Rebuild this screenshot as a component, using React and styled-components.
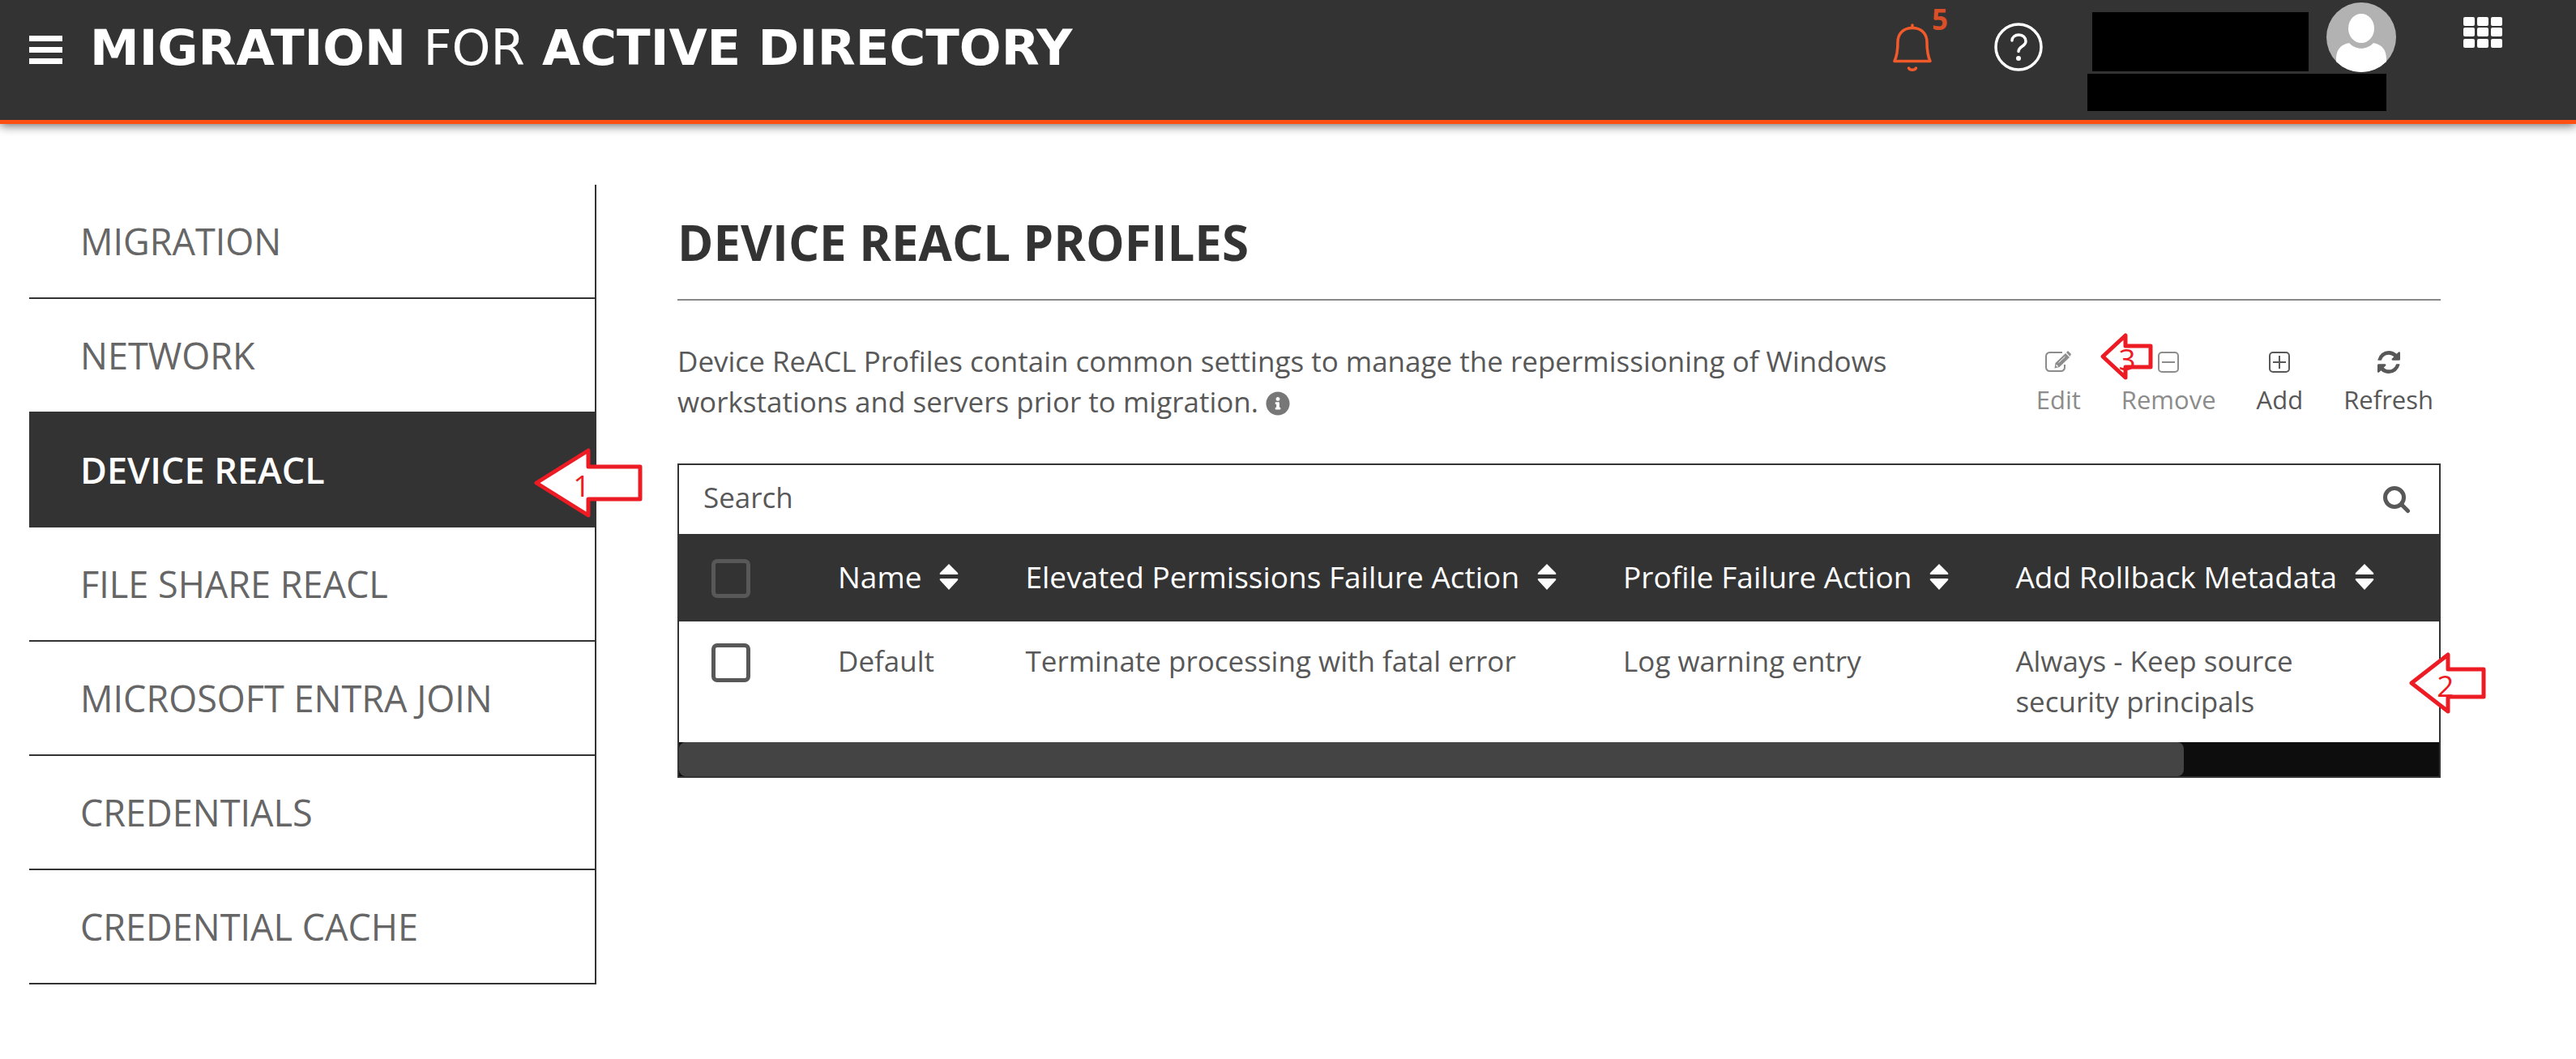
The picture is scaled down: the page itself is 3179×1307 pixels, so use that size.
import { useState } from "react";
import styled, { createGlobalStyle } from "styled-components";
import { FaInfoCircle } from "react-icons/fa";

const menu = [
  "Migration",
  "Network",
  "Device ReACL",
  "File Share ReACL",
  "Microsoft Entra Join",
  "Credentials",
  "Credential Cache",
];

const columns = [
  "Name",
  "Elevated Permissions Failure Action",
  "Profile Failure Action",
  "Add Rollback Metadata",
];

const profiles = [
  {
    name: "Default",
    elevated: "Terminate processing with fatal error",
    failure: "Log warning entry",
    rollback: "Always - Keep source security principals",
  },
];

function BellIcon() {
  return (
    <svg width="48" height="60" viewBox="0 0 48 60" fill="none" stroke="#f15a2b" strokeWidth="3.5" strokeLinecap="round">
      <path d="M24 3v3" />
      <path d="M24 6.500C12.500 6.500 6 14 6 24c0 12-1 17-4 23.500h44c-3-6.500-4-11.500-4-23.500C42 14 35.500 6.500 24 6.500z" strokeLinejoin="round" />
      <path d="M19.500 56c1.500 3 7.500 3 9 0" />
    </svg>
  );
}

function HelpIcon() {
  return (
    <svg width="60" height="60" viewBox="0 0 60 60" fill="none" stroke="#fff" strokeWidth="3.5">
      <circle cx="30" cy="30" r="28" />
      <path d="M22 22c0-4 3.500-7 8.500-7s8.500 3.500 8.500 8c0 6.500-9 6-9 12.500" strokeLinecap="round" />
      <circle cx="30" cy="44" r="3" fill="#fff" stroke="none" />
    </svg>
  );
}

function UserIcon() {
  return (
    <svg width="86" height="86" viewBox="0 0 86 86">
      <clipPath id="avatar">
        <circle cx="43" cy="43" r="43" />
      </clipPath>
      <g clipPath="url(#avatar)">
        <rect width="86" height="86" fill="#b2b2b2" />
        <ellipse cx="43" cy="32" rx="16" ry="18" fill="#fff" />
        <path d="M12 86V70c0-11 5-18 16-20 8 9 22 9 30 0 11 2 16 9 16 20v16z" fill="#fff" />
      </g>
    </svg>
  );
}

function AppsIcon() {
  const spots = [0, 17, 34];
  return (
    <svg width="48" height="38" viewBox="0 0 48 38" fill="#fff">
      {[0, 13, 27].map((y) =>
        spots.map((x) => <rect key={x + "-" + y} x={x} y={y} width="14" height="11" rx="2" />)
      )}
    </svg>
  );
}

function EditIcon() {
  return (
    <svg width="32" height="28" viewBox="0 0 32 28" fill="none" stroke="currentColor" strokeWidth="2">
      <path d="M21 2H5.500A4.500 4.500 0 0 0 1 6.500v14A4.500 4.500 0 0 0 5.500 25h14a4.500 4.500 0 0 0 4.500-4.500V17" />
      <path d="M11.500 21.500l1-6.500L25 3l5 5-12.500 12z" fill="currentColor" stroke="none" />
      <path d="M26 2l2-2 4 4-1.500 3z" fill="currentColor" stroke="none" />
      <path d="M16.500 14.500l8-7.500" stroke="#fff" strokeWidth="1" />
      <path d="M13.500 17.500l2 2" stroke="#fff" strokeWidth="1.500" />
    </svg>
  );
}

function BoxIcon({ plus }) {
  return (
    <svg width="26" height="26" viewBox="0 0 26 26" fill="none" stroke="currentColor" strokeWidth="2">
      <rect x="1" y="1" width="24" height="24" rx="4" />
      <path d={plus ? "M5 13h16M13 5v16" : "M5 13h16"} />
    </svg>
  );
}

function RefreshIcon() {
  return (
    <svg width="28" height="28" viewBox="0 0 1536 1536" fill="currentColor">
      <path d="M1511 928q0 5-1 7-64 268-268 434.500T764 1536q-146 0-282.500-55T238 1324l-129 129q-19 19-45 19t-45-19-19-45V960q0-26 19-45t45-19h448q26 0 45 19t19 45-19 45l-137 137q71 66 161 102t187 36q134 0 250-65t186-179q11-17 53-117 8-23 30-23h192q13 0 22.500 9.500t9.500 22.500zm25-800v448q0 26-19 45t-45 19h-448q-26 0-45-19t-19-45 19-45l138-138Q969 256 768 256q-134 0-250 65T332 500q-11 17-53 117-8 23-30 23H50q-13 0-22.500-9.500T18 608v-7q65-268 270-434.500T768 0q146 0 284 55.500T1297 212l130-129q19-19 45-19t45 19 19 45z" />
    </svg>
  );
}

function SearchIcon() {
  return (
    <svg width="34" height="34" viewBox="0 0 34 34" fill="none" stroke="currentColor" strokeWidth="5">
      <circle cx="14" cy="14" r="11.500" />
      <path d="M22.500 22.500l8 8" strokeLinecap="round" />
    </svg>
  );
}

function SortIcon() {
  return (
    <svg width="24" height="32" viewBox="0 0 24 32" fill="#fff">
      <path d="M12 0l11 11q1 2-1 2H2q-2 0-1-2zM12 32L1 20q-1-2 1-2h20q2 0 1 2z" />
    </svg>
  );
}

function Arrow({ width, height, points, children, ...pos }) {
  return (
    <Callout $pos={pos} $w={width} $h={height}>
      <svg width={width} height={height}>
        <polygon points={points} fill="#fff" stroke="#ed1c24" strokeWidth="5" strokeLinejoin="round" />
      </svg>
      <span>{children}</span>
    </Callout>
  );
}

function App() {
  const [active, setActive] = useState("Device ReACL");
  const [search, setSearch] = useState("");

  return (
    <>
      <GlobalStyle />
      <Header>
        <MenuButton aria-label="Menu">
          <i />
          <i />
          <i />
        </MenuButton>
        <Brand>
          Migration <span>for</span> Active Directory
        </Brand>
        <Alerts aria-label="Notifications">
          <BellIcon />
          <b>5</b>
        </Alerts>
        <IconButton aria-label="Help">
          <HelpIcon />
        </IconButton>
        <Account>
          <UserRow>
            <NameBlock />
            <UserIcon />
          </UserRow>
          <MailBlock />
        </Account>
        <AppsButton aria-label="Apps">
          <AppsIcon />
        </AppsButton>
      </Header>

      <Layout>
        <Sidebar>
          {menu.map((item) => (
            <MenuItem
              key={item}
              href="#"
              $active={item === active}
              onClick={() => setActive(item)}
            >
              {item}
              {item === "Device ReACL" && (
                <Arrow left="623px" top="43px" width={134} height={86} points="3,43 67,3 67,23 131,23 131,63 67,63 67,83">
                  1
                </Arrow>
              )}
            </MenuItem>
          ))}
        </Sidebar>

        <Content>
          <h1>Device ReACL Profiles</h1>
          <Intro>
            <p>
              Device ReACL Profiles contain common settings to manage the repermissioning of
              Windows workstations and servers prior to migration. <FaInfoCircle />
            </p>
            <Toolbar>
              <Tool disabled>
                <EditIcon />
                Edit
              </Tool>
              <Tool disabled>
                <BoxIcon />
                Remove
              </Tool>
              <Tool>
                <BoxIcon plus />
                Add
              </Tool>
              <Tool>
                <RefreshIcon />
                Refresh
              </Tool>
              <Arrow left="78px" top="-11px" width={66} height={60} points="4,30 32,4 32,17 63,17 63,43 32,43 32,56">
                3
              </Arrow>
            </Toolbar>
          </Intro>

          <Panel>
            <SearchBar>
              <input
                type="text"
                aria-label="Search"
                placeholder="Search"
                value={search}
                onChange={(e) => setSearch(e.target.value)}
              />
              <button aria-label="Search">
                <SearchIcon />
              </button>
            </SearchBar>
            <Table>
              <thead>
                <tr>
                  <th>
                    <Checkbox type="checkbox" aria-label="Select all" disabled />
                  </th>
                  {columns.map((column) => (
                    <th key={column}>
                      <SortButton>
                        {column}
                        <SortIcon />
                      </SortButton>
                    </th>
                  ))}
                </tr>
              </thead>
              <tbody>
                {profiles.map((profile) => (
                  <tr key={profile.name}>
                    <td>
                      <Checkbox type="checkbox" aria-label={profile.name} />
                    </td>
                    <td>{profile.name}</td>
                    <td>{profile.elevated}</td>
                    <td>{profile.failure}</td>
                    <td>{profile.rollback}</td>
                  </tr>
                ))}
              </tbody>
            </Table>
            <ScrollTrack>
              <ScrollThumb />
            </ScrollTrack>
            <Arrow right="-58px" top="231px" width={95} height={76} points="3,38 48,3 48,21 92,21 92,55 48,55 48,73">
              2
            </Arrow>
          </Panel>
        </Content>
      </Layout>
    </>
  );
}

export default App;

const GlobalStyle = createGlobalStyle`
  * {
    box-sizing: border-box;
  }
  body {
    margin: 0;
    background: #fff;
    color: #585858;
    font-family: "Open Sans", sans-serif;
    font-size: 35px;
    line-height: 50px;
  }
  button {
    padding: 0;
    border: none;
    background: none;
    color: inherit;
    font: inherit;
    cursor: pointer;
  }
  svg {
    display: block;
    flex: none;
  }
`;

const Header = styled.header`
  display: flex;
  align-items: flex-start;
  height: 153px;
  padding: 0 91px 0 36px;
  background: #333;
  border-bottom: 5px solid #ff4f12;
  box-shadow: 0 2px 12px rgba(0, 0, 0, 0.6);
`;

const MenuButton = styled.button`
  display: flex;
  flex-direction: column;
  gap: 7px;
  margin-top: 44px;

  i {
    width: 41px;
    height: 7px;
    background: #fff;
  }
`;

const Brand = styled.div`
  flex: 1;
  margin: 19px 0 0 34px;
  color: #fff;
  font-family: "DejaVu Sans", sans-serif;
  font-size: 61px;
  font-weight: 700;
  line-height: 80px;
  text-transform: uppercase;
  white-space: nowrap;

  span {
    font-weight: 400;
  }
`;

const IconButton = styled.button`
  margin-top: 28px;
`;

const Alerts = styled(IconButton)`
  display: flex;
  margin-right: 57px;

  b {
    margin-top: -20px;
    color: #d94f27;
    font-size: 35px;
    line-height: 32px;
  }
`;

const Account = styled.div`
  margin: 3px 0 0 55px;
`;

const UserRow = styled.div`
  display: flex;
  gap: 22px;
  padding-left: 6px;
`;

const NameBlock = styled.div`
  width: 267px;
  height: 73px;
  margin-top: 12px;
  background: #000;
`;

const MailBlock = styled.div`
  width: 369px;
  height: 46px;
  margin-top: 2px;
  background: #000;
`;

const AppsButton = styled(IconButton)`
  margin: 21px 0 0 83px;
`;

const Layout = styled.div`
  display: flex;
  align-items: flex-start;
  gap: 100px;
  padding: 75px 167px 40px 36px;
`;

const Sidebar = styled.nav`
  flex: none;
  width: 700px;
  border-right: 2px solid #333;
`;

const MenuItem = styled.a`
  position: relative;
  display: block;
  padding: 40px 63px 39px;
  border-bottom: 2px solid #333;
  background: ${(props) => (props.$active ? "#333" : "transparent")};
  color: ${(props) => (props.$active ? "#fff" : "#666")};
  font-size: 45px;
  font-weight: ${(props) => (props.$active ? 600 : 400)};
  line-height: 60px;
  text-decoration: none;
  text-transform: uppercase;
`;

const Callout = styled.div`
  position: absolute;
  z-index: 1;
  left: ${(props) => props.$pos.left};
  right: ${(props) => props.$pos.right};
  top: ${(props) => props.$pos.top};
  width: ${(props) => props.$w}px;
  height: ${(props) => props.$h}px;
  color: #ed1c24;
  font-size: 37px;
  font-weight: 400;
  line-height: ${(props) => props.$h + 6}px;

  span {
    position: absolute;
    left: 36%;
    top: 0;
  }
`;

const Content = styled.main`
  flex: 1;
  min-width: 0;

  h1 {
    margin: 0;
    padding: 31px 0 30px;
    border-bottom: 2px solid #888;
    color: #333;
    font-size: 60px;
    font-weight: 700;
    line-height: 80px;
    text-transform: uppercase;
  }
`;

const Intro = styled.div`
  display: flex;
  justify-content: space-between;
  align-items: flex-start;
  padding: 50px 9px 51px 0;

  p {
    max-width: 1540px;
    margin: 0;
  }
  p svg {
    display: inline-block;
    width: 30px;
    height: 30px;
    vertical-align: -4px;
    color: #777;
  }
`;

const Toolbar = styled.div`
  position: relative;
  display: flex;
  gap: 50px;
  padding-top: 12px;
`;

const Tool = styled.button`
  display: flex;
  flex-direction: column;
  align-items: center;
  gap: 12px;
  font-size: 31px;
  line-height: 40px;
  color: ${(props) => (props.disabled ? "#8c8c8c" : "#585858")};

  svg {
    height: 28px;
  }
`;

const Panel = styled.section`
  position: relative;
  border: 2px solid #333;
`;

const SearchBar = styled.div`
  display: flex;
  align-items: center;
  height: 85px;
  padding: 0 35px 0 30px;

  input {
    flex: 1;
    border: none;
    outline: none;
    background: none;
    color: #585858;
    font: inherit;
    padding: 0 0 6px;
  }
  input::placeholder {
    color: #585858;
    opacity: 1;
  }
`;

const Table = styled.table`
  width: 100%;
  border-collapse: collapse;

  th,
  td {
    padding: 24px 42px 25px 40px;
    text-align: left;
    vertical-align: top;
  }
  th {
    padding-top: 28px;
    padding-bottom: 29px;
    background: #333;
    color: #fff;
    font-size: 37px;
    font-weight: 400;
    white-space: nowrap;
  }
  th:first-child,
  td:first-child {
    padding-right: 68px;
  }
  th:last-child,
  td:last-child {
    padding-right: 72px;
  }
`;

const SortButton = styled.button`
  display: flex;
  align-items: center;
  gap: 22px;
`;

const Checkbox = styled.input`
  display: block;
  appearance: none;
  width: 48px;
  height: 48px;
  margin: 3px 0 0;
  border: 5px solid #585858;
  border-radius: 7px;
`;

const ScrollTrack = styled.div`
  height: 42px;
  background: #0d0d0d;
`;

const ScrollThumb = styled.div`
  width: 85.5%;
  height: 100%;
  border-radius: 8px;
  background: #444;
`;
